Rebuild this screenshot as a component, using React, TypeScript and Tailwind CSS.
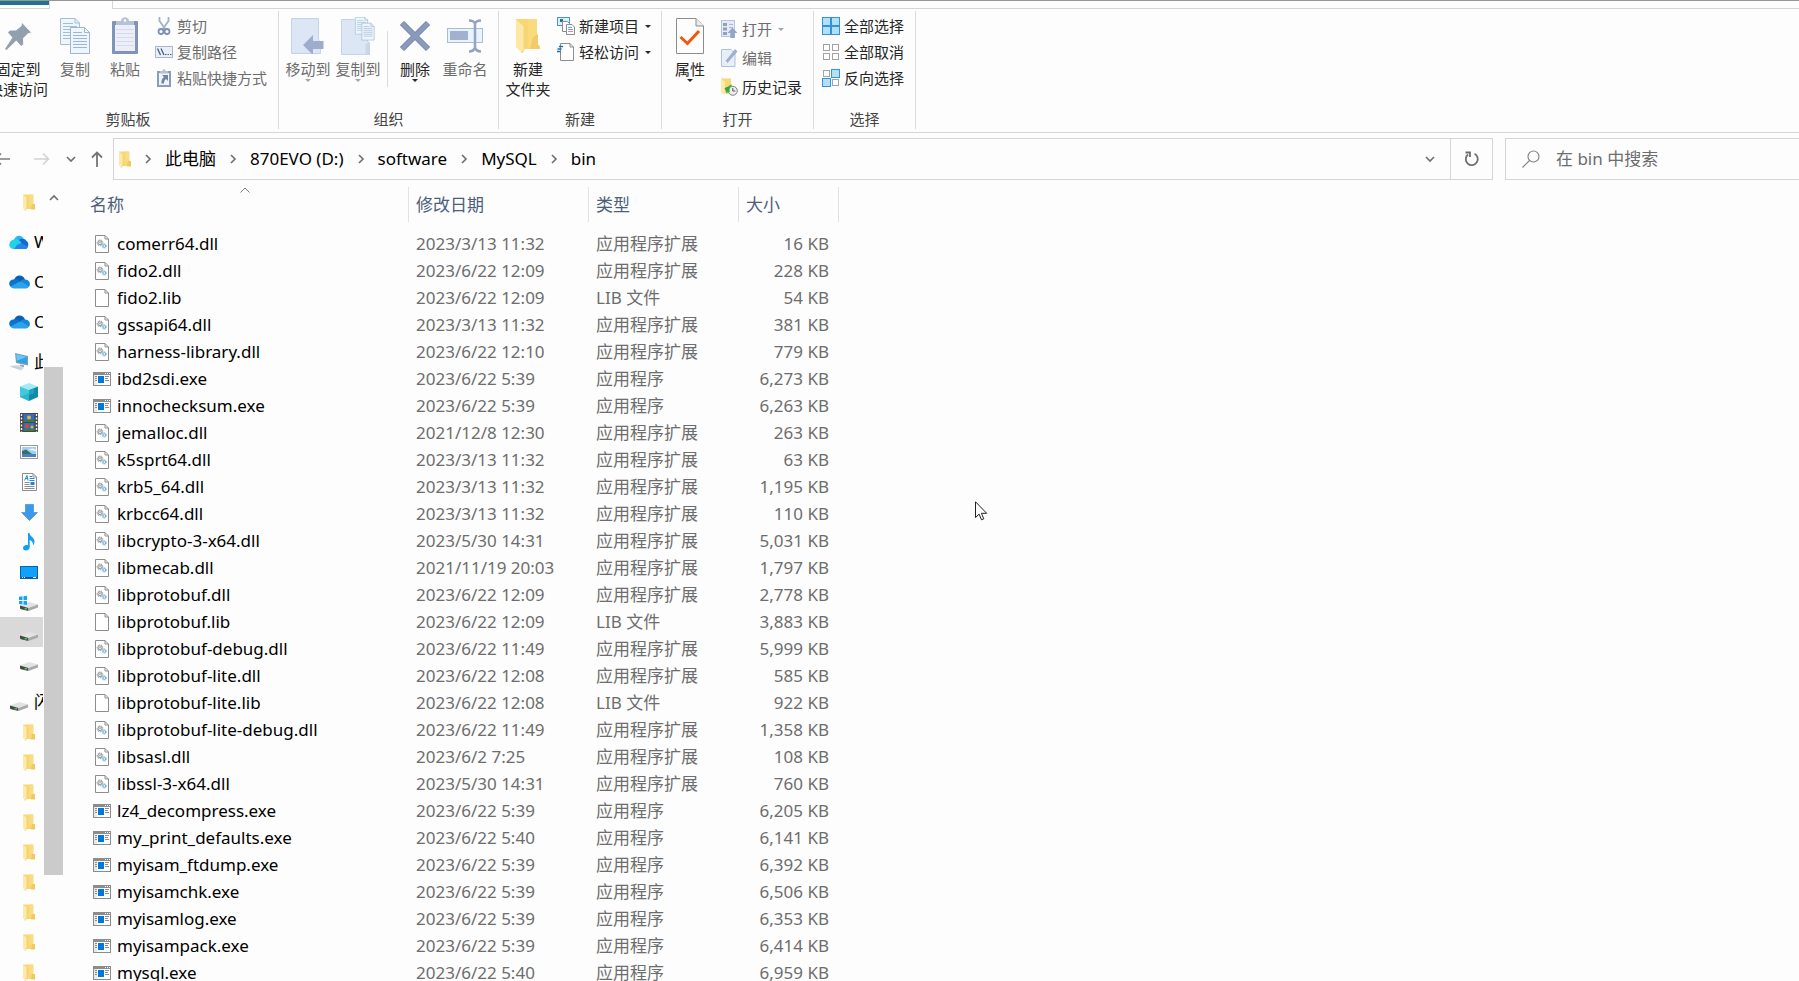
import type { ReactNode } from "react";

type Kind = "dll" | "lib" | "exe";

const typeNames: Record<Kind, string> = {
  dll: "应用程序扩展",
  lib: "LIB 文件",
  exe: "应用程序",
};

const files: [string, Kind, string, string][] = [
  ["comerr64.dll", "dll", "2023/3/13 11:32", "16 KB"],
  ["fido2.dll", "dll", "2023/6/22 12:09", "228 KB"],
  ["fido2.lib", "lib", "2023/6/22 12:09", "54 KB"],
  ["gssapi64.dll", "dll", "2023/3/13 11:32", "381 KB"],
  ["harness-library.dll", "dll", "2023/6/22 12:10", "779 KB"],
  ["ibd2sdi.exe", "exe", "2023/6/22 5:39", "6,273 KB"],
  ["innochecksum.exe", "exe", "2023/6/22 5:39", "6,263 KB"],
  ["jemalloc.dll", "dll", "2021/12/8 12:30", "263 KB"],
  ["k5sprt64.dll", "dll", "2023/3/13 11:32", "63 KB"],
  ["krb5_64.dll", "dll", "2023/3/13 11:32", "1,195 KB"],
  ["krbcc64.dll", "dll", "2023/3/13 11:32", "110 KB"],
  ["libcrypto-3-x64.dll", "dll", "2023/5/30 14:31", "5,031 KB"],
  ["libmecab.dll", "dll", "2021/11/19 20:03", "1,797 KB"],
  ["libprotobuf.dll", "dll", "2023/6/22 12:09", "2,778 KB"],
  ["libprotobuf.lib", "lib", "2023/6/22 12:09", "3,883 KB"],
  ["libprotobuf-debug.dll", "dll", "2023/6/22 11:49", "5,999 KB"],
  ["libprotobuf-lite.dll", "dll", "2023/6/22 12:08", "585 KB"],
  ["libprotobuf-lite.lib", "lib", "2023/6/22 12:08", "922 KB"],
  ["libprotobuf-lite-debug.dll", "dll", "2023/6/22 11:49", "1,358 KB"],
  ["libsasl.dll", "dll", "2023/6/2 7:25", "108 KB"],
  ["libssl-3-x64.dll", "dll", "2023/5/30 14:31", "760 KB"],
  ["lz4_decompress.exe", "exe", "2023/6/22 5:39", "6,205 KB"],
  ["my_print_defaults.exe", "exe", "2023/6/22 5:40", "6,141 KB"],
  ["myisam_ftdump.exe", "exe", "2023/6/22 5:39", "6,392 KB"],
  ["myisamchk.exe", "exe", "2023/6/22 5:39", "6,506 KB"],
  ["myisamlog.exe", "exe", "2023/6/22 5:39", "6,353 KB"],
  ["myisampack.exe", "exe", "2023/6/22 5:39", "6,414 KB"],
  ["mysql.exe", "exe", "2023/6/22 5:40", "6,959 KB"],
];

const crumbs = ["此电脑", "870EVO (D:)", "software", "MySQL", "bin"];

/* ---------- file icons ---------- */

function FileIcon({ kind }: { kind: Kind }) {
  if (kind === "exe") {
    return (
      <svg width="18" height="18" viewBox="0 0 18 18" className="shrink-0">
        <rect x="0.5" y="2.5" width="17" height="13" fill="#fff" stroke="#8c8c8c" />
        <rect x="0" y="2" width="18" height="3" fill="#8c8c8c" />
        <path d="M12 3h1v1h-1zM14 3h1v1h-1zM16 3h1v1h-1z" fill="#fff" />
        <rect x="1" y="5" width="3" height="10" fill="#e8e8e8" />
        <path d="M2 6.5h2M2 8.5h2M2 10.5h2M12 6.5h4M12 8.5h3M12 10.5h4" stroke="#8c8c8c" />
        <rect x="5" y="6" width="6" height="7" fill="#0078d7" />
      </svg>
    );
  }
  return (
    <svg width="18" height="18" viewBox="0 0 18 18" className="shrink-0">
      <path d="M2.5 0.5h9.5l3.5 3.5v13.500h-13z" fill="#fff" stroke="#8d8d8d" />
      <path d="M12 0.5v3.5h3.5" fill="none" stroke="#8d8d8d" />
      {kind === "dll" && (
        <>
          <circle cx="7" cy="7.800" r="2.900" fill="none" stroke="#7c8287" strokeWidth="1" strokeDasharray="0.9 0.9" />
          <circle cx="7" cy="7.800" r="2" fill="#fff" stroke="#7c8287" strokeWidth="0.900" />
          <circle cx="7" cy="7.800" r="0.700" fill="#7c8287" />
          <circle cx="11.300" cy="11" r="2.200" fill="none" stroke="#6aa9c9" strokeWidth="0.900" strokeDasharray="0.8 0.7" />
          <circle cx="11.300" cy="11" r="1.400" fill="#e3f3fb" stroke="#6aa9c9" strokeWidth="0.900" />
        </>
      )}
    </svg>
  );
}

function FolderIcon() {
  return (
    <svg width="12" height="17" viewBox="0 0 12 17" className="shrink-0">
      <path d="M0 0.5h9.5v11l2.5 0.5v3H3z" fill="#f8d775" />
      <path d="M9 10h3v5.5H8z" fill="#f0c95f" />
      <path d="M6.5 0.5h4v9.5h-2l-2 2z" fill="#f9dc84" />
      <path d="M0 0.5l4 3.5v10l-1.8 2.8L0 14z" fill="#fde9a9" />
      <path d="M4 4v10l-1.8 2.8" fill="none" stroke="#eccb6b" strokeWidth="0.6" />
    </svg>
  );
}

/* ---------- navigation pane icons ---------- */

function CloudIcon({ color }: { color: "cyan" | "blue" }) {
  if (color === "cyan") {
    return (
      <svg width="20" height="15" viewBox="0 0 20 15">
        <path d="M6 3C8 0 13-0.5 15 4.5L11 10 4 6z" fill="#2ab4f5" />
        <path d="M9 6c2-3 7-3 8.5 0 2.5 1.5 2.5 6-0.5 8H8z" fill="#1268d8" />
        <path d="M5 4.5c3-1 6 0.5 7.5 3.5L16 14H5c-6 0-6.5-8 0-9.5z" fill="#20d3e6" />
        <path d="M8 10l4-2 7 3.5c-0.8 2-2 2.500-4 2.500H5z" fill="#2484ea" />
      </svg>
    );
  }
  return (
    <svg width="21" height="14" viewBox="0 0 21 14">
      <path d="M5 5C6-0.5 14-1.5 16 4.5L10 9z" fill="#0860b4" />
      <path d="M4.5 4.5C7 3.5 9 4.5 10.5 6L14 9 2 12C-1.5 9 0.5 4.5 4.5 4.5z" fill="#0d73cc" />
      <path d="M11 6.5c2-2 4-2.5 5.5-2 4 0 5.5 4.5 3.5 7.5z" fill="#1687dc" />
      <path d="M1.5 11.5L11 6.5l9 5c-0.8 1.5-2 2-4 2H5c-1.5 0-2.8-0.8-3.5-2z" fill="#2ba3ec" />
    </svg>
  );
}

function ComputerIcon() {
  return (
    <svg width="20" height="18" viewBox="0 0 20 18">
      <path d="M6 0l13 3v9.5L7 10z" fill="#8d99a5" />
      <path d="M7 1.2l11 2.6v7.2L8 8.9z" fill="#29a3ea" />
      <path d="M7 1.2l11 2.6-10 4z" fill="#69c6f7" />
      <path d="M11 11.5l4 0.8v2l-4-0.8z" fill="#9aa7b5" />
      <path d="M0 13l10-1 5 3-3 2.5z" fill="#d6dde7" />
      <path d="M2 13.5l9 2.5M5 13l8 2.5" stroke="#b4c0d0" strokeWidth="0.6" />
    </svg>
  );
}

function CubeIcon() {
  return (
    <svg width="18" height="18" viewBox="0 0 18 18">
      <path d="M0 3.5L9 0l9 3.5L9 7z" fill="#a4eaf4" />
      <path d="M0 3.5L9 7v11l-9-4z" fill="#40c8dc" />
      <path d="M18 3.5L9 7v11l9-4z" fill="#128ba6" />
      <path d="M0 14l9-4v8zM9 7l5-1.5v5L9 12z" fill="#24aec8" opacity="0.7" />
    </svg>
  );
}

function VideoIcon() {
  return (
    <svg width="18" height="19" viewBox="0 0 18 19">
      <rect width="18" height="19" fill="#474747" />
      <path d="M1.5 1v18M16.5 1v18" stroke="#fff" strokeWidth="1.4" strokeDasharray="2 1.5" />
      <rect x="3.5" y="1" width="11" height="8" fill="#2f6fc6" />
      <rect x="3.5" y="10" width="11" height="8" fill="#2f6fc6" />
      <path d="M3.5 7h11v2h-11zM3.5 16h11v2h-11z" fill="#3f7c35" />
      <circle cx="9" cy="4.5" r="2" fill="#f2b321" />
      <circle cx="7" cy="13" r="2" fill="#e2452e" />
      <circle cx="12" cy="14" r="1.5" fill="#f2b321" />
    </svg>
  );
}

function PictureIcon() {
  return (
    <svg width="18" height="14" viewBox="0 0 18 14">
      <rect x="0.5" y="0.5" width="17" height="13" fill="#fff" stroke="#9b9b9b" />
      <rect x="2" y="2" width="14" height="10" fill="#9fd1f7" />
      <path d="M2 6l4-1.5 6 4.5H2z" fill="#3d6e63" />
      <path d="M2 9h14v3H2z" fill="#4784bd" />
      <path d="M8 4.5l5-1 3 1.5v1z" fill="#fff" />
    </svg>
  );
}

function DocumentIcon() {
  return (
    <svg width="15" height="18" viewBox="0 0 15 18">
      <path d="M0.5 0.5H11l3.5 3.5v13.5H0.5z" fill="#fff" stroke="#8d8d8d" />
      <path d="M11 0.5V4h3.5" fill="none" stroke="#8d8d8d" />
      <path d="M2.5 7.5l2.5-5 1 5M3.5 5.5h2.5M7.5 3.5H10M7.5 5.5h5M7.5 7.5h5" stroke="#1e88d8" fill="none" />
      <path d="M2.5 9.5h5M2.5 11.5h5M2.5 13.5h10M2.5 15.5h10" stroke="#848c94" />
      <rect x="8.5" y="9" width="4" height="3" fill="#2f7fc4" />
    </svg>
  );
}

function DownloadIcon() {
  return (
    <svg width="17" height="17" viewBox="0 0 17 17">
      <path d="M4.5 0.5h8v8H16.5l-8 8-8-8h4z" fill="#3c98e8" stroke="#2e86d6" strokeWidth="0.6" />
    </svg>
  );
}

function MusicIcon() {
  return (
    <svg width="12" height="18" viewBox="0 0 12 18">
      <path d="M5 0h1.5c0.5 3.5 5 4.5 5 8.5 0 1.800-0.8 3-1.5 4 0.5-3-1.2-4.800-3.300-5.500V14c0 2.200-1.700 3.500-3.700 3.500S0 16.500 0 15c0-2 2.500-3.500 5-2.800z" fill="#0fa0f5" />
    </svg>
  );
}

function DesktopIcon() {
  return (
    <svg width="18" height="13" viewBox="0 0 18 13">
      <rect x="0.5" y="0.5" width="17" height="12" fill="#0fa2fb" stroke="#0b62a8" />
      <rect x="1" y="11" width="16" height="1" fill="#0b4f8c" />
      <path d="M2 11.5h1M4 11.5h1M13 11.5h3" stroke="#fff" />
    </svg>
  );
}

function DriveIcon({ system }: { system?: boolean }) {
  return (
    <svg width="20" height="18" viewBox="0 0 20 18">
      <path d="M1 12.500l9.500-3.500 8.500 2.500-9.500 3.500z" fill="#e2e2e2" />
      <path d="M1 12.500l8.500 2.500V18L2 16.300 1 15.500z" fill="#474747" />
      <path d="M9.500 15l9.500-3.500V14.500L9.500 18z" fill="#a9a9a9" />
      <rect x="5.500" y="15" width="2.500" height="1.500" fill="#3fcf45" />
      {system && <path d="M0 3.800l3.500-0.500v3.700H0zM4.500 3.200L8 2.800v4.200H4.500zM0 8h3.500v3.500L0 11zM4.500 8H8v4l-3.500-0.400z" fill="#12a5f4" />}
    </svg>
  );
}

/* ---------- ribbon icons ---------- */

function PinIcon() {
  return (
    <svg width="26" height="27" viewBox="0 0 26 27">
      <path d="M17 0l9 9.5-3 0.8-5 5 0.2 6-2 1.7-5-5.5L1.5 27 0 26l7.5-11.5L3 9.5l2-2h6L16.5 3z" fill="#919fae" />
    </svg>
  );
}

function CopyPages({ small }: { small?: boolean }) {
  return (
    <g transform={small ? "translate(14 0) scale(0.65)" : undefined}>
      <path d="M0.5 0.5h14.5l4.5 4.5v21.5H0.5z" fill="#edf6fc" stroke="#a6bdd6" />
      <path d="M15 0.5V5h4.5M3 5.5h10M3 8.5h14M3 11.5h14M3 14.5h7M3 17.5h7M3 20.5h7" stroke="#a6bdd6" fill="none" />
      <path d="M10.5 9.5h14l5 5v21h-19z" fill="#edf6fc" stroke="#a0b5d2" />
      <path d="M24.5 9.5v5h5M13 14.5h9M13 17.5h14M13 20.5h14M13 23.5h14M13 26.5h14M13 29.5h14" stroke="#a0b5d2" fill="none" />
    </g>
  );
}

function CopyIcon() {
  return (
    <svg width="30" height="36" viewBox="0 0 30 36">
      <CopyPages />
    </svg>
  );
}

function PasteIcon() {
  return (
    <svg width="26" height="38" viewBox="0 0 26 38">
      <rect y="4" width="26" height="33" rx="1" fill="#8193ba" />
      <path d="M3 8h20v26H3z" fill="#eceff8" />
      <path d="M4 12.5h18M4 16.5h18M4 20.5h18M4 24.5h18M4 28.5h18" stroke="#d3dbec" />
      <path d="M4 4h5c0-5 8-5 8 0h5v4H4z" fill="#b6c2d8" />
      <circle cx="13" cy="3.5" r="1.3" fill="#fff" />
    </svg>
  );
}

function MoveToIcon() {
  return (
    <svg width="34" height="36" viewBox="0 0 34 36">
      <path d="M0.5 0.5h27V22l2 2v11.5H0.5z" fill="#dde6f4" stroke="#c6d2e8" />
      <path d="M12 27l10-10v6h10.5v8H22v6z" fill="#9dadcb" />
    </svg>
  );
}

function CopyToIcon() {
  return (
    <svg width="34" height="38" viewBox="0 0 34 38">
      <path d="M0.5 2.5h26V24l2 2v11.5H0.5z" fill="#dde6f4" stroke="#c6d2e8" />
      <path d="M24.5 27l4-2v12.5h-4z" fill="#cbd6e8" />
      <CopyPages small />
    </svg>
  );
}

function DeleteIcon() {
  return (
    <svg width="32" height="32" viewBox="0 0 32 32">
      <path d="M3 3l26 26M29 3L3 29" stroke="#7386ae" strokeWidth="6" />
      <path d="M3 3l26 26M29 3L3 29" stroke="#8a9aba" strokeWidth="4" />
    </svg>
  );
}

function RenameIcon() {
  return (
    <svg width="36" height="34" viewBox="0 0 36 34">
      <rect x="0.5" y="9.5" width="35" height="14" fill="#e9f3fc" stroke="#a7bcd8" />
      <rect x="3" y="12" width="18" height="9" fill="#a2b1cf" />
      <path d="M22 1.5c3 0 5 0.5 6 3 1-2.5 3-3 6-3M22 32.5c3 0 5-1 6-4 1 3 3 4 6 4M28 4v25" fill="none" stroke="#92a3c4" strokeWidth="2.5" />
    </svg>
  );
}

function NewFolderIcon() {
  return (
    <svg width="25" height="36" viewBox="0 0 25 36">
      <path d="M0 1h21v25l3 2v3H8z" fill="#f8d673" />
      <path d="M12 1h9v24l-5 2-4 3z" fill="#fadb7c" />
      <path d="M17 19l5-3v11l2 4H14z" fill="#efcc69" />
      <path d="M0 1l8 8v24l-2 2.5L0 29z" fill="#fde8a5" />
      <path d="M8 9v22l-2 4" stroke="#f2d581" fill="none" />
    </svg>
  );
}

function PropertiesIcon() {
  return (
    <svg width="28" height="36" viewBox="0 0 28 36">
      <path d="M0.5 0.5H20l7.5 7.5v27.5H0.5z" fill="#fdfdfd" stroke="#8c8c8c" />
      <path d="M20 0.5V8h7.5" fill="#ececec" stroke="#8c8c8c" />
      <path d="M4.5 19l7 6.5L23 13" fill="none" stroke="#f1570d" strokeWidth="3" />
    </svg>
  );
}

function CutIcon() {
  return (
    <svg width="18" height="18" viewBox="0 0 18 18">
      <path d="M4.5 0v4l6.5 9M13.5 0v4L7 13" fill="none" stroke="#a3b1c8" strokeWidth="1.8" />
      <circle cx="6" cy="14.5" r="2.5" fill="none" stroke="#7d90b5" strokeWidth="1.8" />
      <circle cx="12" cy="14.5" r="2.5" fill="none" stroke="#7d90b5" strokeWidth="1.8" />
    </svg>
  );
}

function CopyPathIcon() {
  return (
    <svg width="18" height="18" viewBox="0 0 18 18">
      <rect x="0.5" y="3.5" width="17" height="11" fill="#e8eff9" stroke="#a9b9d4" />
      <path d="M2.5 5.5l3 6.5M6 5.5l3 6.5" stroke="#4c5f85" strokeWidth="1.3" />
      <path d="M10 11.5h1.500M12.500 11.500H14M15 11.500h1.500" stroke="#4c5f85" />
    </svg>
  );
}

function PasteShortcutIcon() {
  return (
    <svg width="18" height="18" viewBox="0 0 18 18">
      <path d="M2 2h14v16H2z" fill="#8c9cbf" />
      <path d="M4 4h10v12H4z" fill="#f0f3fa" />
      <path d="M5 2h2.5c0-2.5 3-2.5 3 0H13v2.5H5z" fill="#b3c0d6" />
      <path d="M7 6h6v6l-2-2c-1.500 1-2 2.500-2 4.500H6.500c-0.500-2.500 0.500-5 2.500-6.500z" fill="#6f83ab" />
    </svg>
  );
}

function NewItemIcon() {
  return (
    <svg width="18" height="18" viewBox="0 0 18 18">
      <rect x="0.5" y="0.5" width="12" height="8" fill="#d7eefb" stroke="#4a98c0" />
      <rect x="3" y="2" width="3" height="3" fill="#2e6f95" />
      <path d="M5.5 4.5h5l2 2v8h-7z" fill="#fff" stroke="#8d8d8d" />
      <path d="M9.5 7.5h5.5l2.5 2.5v7.5h-8z" fill="#fff" stroke="#8d8d8d" />
      <path d="M11 10.5h4M11 12.5h5" stroke="#5fa8d3" />
      <path d="M11 14.5h5" stroke="#e08a83" />
    </svg>
  );
}

function EasyAccessIcon() {
  return (
    <svg width="18" height="18" viewBox="0 0 18 18">
      <path d="M3.5 0.5h9.5l3.5 3.5v13.5H3.5z" fill="#fff" stroke="#8d8d8d" />
      <path d="M13 0.5V4h3.5" fill="none" stroke="#8d8d8d" />
      <path d="M2 3.5h4M0.5 6h4M0 8.5h3.5" stroke="#1673b8" strokeWidth="1.4" />
    </svg>
  );
}

function OpenIcon() {
  return (
    <svg width="17" height="18" viewBox="0 0 17 18">
      <rect x="0.5" y="0.5" width="13" height="16" fill="#e4ebf7" stroke="#b6c4dc" />
      <path d="M2 3h4v3H2zM2 7.5h4v3H2zM2 12h4v3H2z" fill="#8fa1c5" />
      <path d="M8 4.5h4M8 7.5h4" stroke="#aab9d5" />
      <path d="M11.5 7.5l5 5.5h-2.8v5H9.3v-5H6.5z" fill="#94a6c8" />
    </svg>
  );
}

function EditIcon() {
  return (
    <svg width="17" height="18" viewBox="0 0 17 18">
      <path d="M0.5 0.5H10l4 4v13H0.5z" fill="#e6effa" stroke="#b0c0da" />
      <path d="M14 0l2.5 2.5L6.5 14 3 15.5 4.5 12z" fill="#a1b1cd" />
      <path d="M4.5 12l2 2-3.5 1.5z" fill="#fff" />
    </svg>
  );
}

function HistoryIcon() {
  return (
    <svg width="17" height="18" viewBox="0 0 17 18">
      <path d="M0 0.5h10v15H3z" fill="#f8d775" />
      <path d="M0 0.5l4 3.5v10l-1.5 2.5L0 14z" fill="#fde9a9" />
      <circle cx="11.8" cy="12.8" r="4.5" fill="#ececec" stroke="#7e7e7e" />
      <path d="M11.8 10v3h2.5" stroke="#555" fill="none" />
      <path d="M3.5 10l4-1.5C8.500 7 10 6.500 11.500 7 8.500 8.500 8 11 9 14.500L7 13l-1 3z" fill="#2bab3c" />
    </svg>
  );
}

function SelectIcon({ on }: { on: [boolean, boolean, boolean, boolean] }) {
  return (
    <svg width="18" height="18" viewBox="0 0 18 18">
      {on.map((selected, i) => {
        const x = (i % 2) * 9;
        const y = Math.floor(i / 2) * 9;
        return selected ? (
          <rect key={i} x={x + 0.5} y={y + 0.5} width="8" height="8" fill="#b5def8" stroke="#2f94e0" />
        ) : (
          <rect key={i} x={x + 1.5} y={y + 1.5} width="6" height="6" fill="#fff" stroke="#a3a3a3" />
        );
      })}
    </svg>
  );
}

/* ---------- ribbon ---------- */

function Caret({ muted }: { muted?: boolean }) {
  return (
    <svg width="6" height="3" viewBox="0 0 6 3" className="shrink-0">
      <path d="M0 0h6L3 3z" fill={muted ? "#a6a6a6" : "#262626"} />
    </svg>
  );
}

type ButtonProps = {
  icon: ReactNode;
  label: string;
  label2?: string;
  muted?: boolean;
  caret?: boolean;
  wide?: boolean;
};

function BigButton({ icon, label, label2, muted, caret, wide }: ButtonProps) {
  return (
    <button
      className={`flex shrink-0 flex-col items-center ${wide ? "w-[58px]" : "w-[50px]"} ${muted ? "text-[#6d6d6d]" : "text-[#262626]"}`}
    >
      <span className="mt-[5px] mb-[3px] flex h-10 items-center">{icon}</span>
      <span className="whitespace-nowrap">{label}</span>
      {label2 && <span className="whitespace-nowrap">{label2}</span>}
      {caret && <Caret muted={muted} />}
    </button>
  );
}

function SmallButton({ icon, label, muted, caret }: ButtonProps) {
  return (
    <button className={`flex items-center gap-1 whitespace-nowrap ${muted ? "text-[#6d6d6d]" : "text-[#262626]"}`}>
      {icon}
      <span>{label}</span>
      {caret && (
        <span className="ml-0.5">
          <Caret muted={muted} />
        </span>
      )}
    </button>
  );
}

function Group({ title, className, children }: { title: string; className: string; children: ReactNode }) {
  return (
    <section className={`flex shrink-0 flex-col justify-between border-r border-[#dcdcdc] ${className}`}>
      <div className="flex">{children}</div>
      <h2 className="text-center text-[#444]">{title}</h2>
    </section>
  );
}

function Ribbon() {
  return (
    <div className="flex h-[124px] overflow-hidden border-b border-[#d6d6d6] pt-0.5 pb-[3px] text-[15px] leading-5">
      <Group title="剪贴板" className="-ml-[22px] w-[301px]">
        <div className="ml-[11px]">
          <BigButton icon={<PinIcon />} label="固定到" label2="快速访问" wide />
        </div>
        <div className="ml-[3px] flex">
          <BigButton icon={<CopyIcon />} label="复制" muted />
          <BigButton icon={<PasteIcon />} label="粘贴" muted />
        </div>
        <div className="ml-[5px] flex flex-col gap-1.5 pt-[5px]">
          <SmallButton icon={<CutIcon />} label="剪切" muted />
          <SmallButton icon={<CopyPathIcon />} label="复制路径" muted />
          <SmallButton icon={<PasteShortcutIcon />} label="粘贴快捷方式" muted />
        </div>
      </Group>

      <Group title="组织" className="w-[220px]">
        <div className="ml-1 flex">
          <BigButton icon={<MoveToIcon />} label="移动到" muted caret />
          <BigButton icon={<CopyToIcon />} label="复制到" muted caret />
        </div>
        <div className="mt-5 mr-0.5 ml-1 h-14 w-px bg-[#dcdcdc]" />
        <BigButton icon={<DeleteIcon />} label="删除" caret />
        <BigButton icon={<RenameIcon />} label="重命名" muted />
      </Group>

      <Group title="新建" className="w-[163px]">
        <BigButton icon={<NewFolderIcon />} label="新建" label2="文件夹" wide />
        <div className="flex flex-col gap-1.5 pt-[5px]">
          <SmallButton icon={<NewItemIcon />} label="新建项目" caret />
          <SmallButton icon={<EasyAccessIcon />} label="轻松访问" caret />
        </div>
      </Group>

      <Group title="打开" className="w-[152px]">
        <div className="ml-[3px]">
          <BigButton icon={<PropertiesIcon />} label="属性" caret />
        </div>
        <div className="ml-1.5 flex flex-col gap-[9px] pt-2">
          <SmallButton icon={<OpenIcon />} label="打开" muted caret />
          <SmallButton icon={<EditIcon />} label="编辑" muted />
          <SmallButton icon={<HistoryIcon />} label="历史记录" />
        </div>
      </Group>

      <Group title="选择" className="w-[102px]">
        <div className="ml-2 flex flex-col gap-1.5 pt-[5px]">
          <SmallButton icon={<SelectIcon on={[true, true, true, true]} />} label="全部选择" />
          <SmallButton icon={<SelectIcon on={[false, false, false, false]} />} label="全部取消" />
          <SmallButton icon={<SelectIcon on={[false, true, true, false]} />} label="反向选择" />
        </div>
      </Group>
    </div>
  );
}

/* ---------- address bar ---------- */

function Chevron({ dir }: { dir: "right" | "down" | "up" }) {
  const d = { right: "M3 1l4 4-4 4", down: "M1 3l4 4 4-4", up: "M1 7l4-4 4 4" }[dir];
  return (
    <svg width="10" height="10" viewBox="0 0 10 10" className="shrink-0">
      <path d={d} fill="none" stroke="#6e6e6e" strokeWidth="1.6" />
    </svg>
  );
}

function AddressBar() {
  return (
    <div className="mb-0.5 flex h-[52px] items-center">
      <nav className="flex w-[113px] shrink-0 items-center">
        <button aria-label="后退" className="-ml-1.5">
          <svg width="16" height="14" viewBox="0 0 16 14">
            <path d="M16 7H1.5M7 1.5L1.5 7 7 12.5" fill="none" stroke="#7d7d7d" strokeWidth="1.6" />
          </svg>
        </button>
        <button aria-label="前进" className="ml-6">
          <svg width="16" height="14" viewBox="0 0 16 14">
            <path d="M0 7h14.5M9 1.5L14.5 7 9 12.5" fill="none" stroke="#d2d2d2" strokeWidth="1.6" />
          </svg>
        </button>
        <button aria-label="最近浏览的位置" className="ml-4">
          <Chevron dir="down" />
        </button>
        <button aria-label="上移" className="ml-[15px]">
          <svg width="12" height="16" viewBox="0 0 12 16">
            <path d="M6 16V1.5M1 6.500L6 1.500l5 5" fill="none" stroke="#757575" strokeWidth="1.8" />
          </svg>
        </button>
      </nav>

      <div className="flex h-[42px] min-w-0 flex-1 items-center border border-[#d5d5d5]">
        <div className="flex flex-1 items-center pl-[5px]">
          <FolderIcon />
          {crumbs.map((crumb) => (
            <div key={crumb} className="flex items-center">
              <span className="mx-3">
                <Chevron dir="right" />
              </span>
              <a href="#" className="whitespace-nowrap text-[17px] leading-6 text-black">
                {crumb}
              </a>
            </div>
          ))}
        </div>
        <button aria-label="展开" className="flex w-10 justify-center">
          <Chevron dir="down" />
        </button>
        <button aria-label="刷新" className="flex h-full w-[42px] items-center justify-center border-l border-[#d5d5d5]">
          <svg width="16" height="16" viewBox="0 0 16 16">
            <path d="M10.5 2.8A6 6 0 1 1 4 3.5" fill="none" stroke="#6e6e6e" strokeWidth="1.8" />
            <path d="M1.5 1.5H6V6" fill="none" stroke="#6e6e6e" strokeWidth="1.8" />
          </svg>
        </button>
      </div>

      <label className="ml-3 flex h-[42px] w-[294px] shrink-0 items-center border border-r-0 border-[#d5d5d5] pl-4">
        <svg width="18" height="18" viewBox="0 0 18 18" className="shrink-0">
          <circle cx="11.5" cy="6.5" r="5.5" fill="none" stroke="#858585" strokeWidth="1.2" />
          <path d="M7.5 10.5l-7 7" stroke="#858585" strokeWidth="1.2" />
        </svg>
        <input
          type="text"
          aria-label="搜索"
          placeholder="在 bin 中搜索"
          className="ml-4 min-w-0 flex-1 bg-transparent text-[17px] leading-6 outline-none placeholder:text-[#6d6d6d]"
        />
      </label>
    </div>
  );
}

/* ---------- navigation pane ---------- */

function NavItem({ icon, label, selected, spaced }: { icon: ReactNode; label?: string; selected?: boolean; spaced?: boolean }) {
  return (
    <a
      href="#"
      className={`flex h-[30px] shrink-0 items-center overflow-hidden ${spaced ? "mt-2.5" : ""} ${selected ? "bg-[#d9d9d9]" : ""}`}
    >
      <span className={`flex w-[22px] shrink-0 justify-center ${label ? "ml-2" : "ml-[18px]"}`}>{icon}</span>
      {label && <span className="ml-1 text-[17px] leading-6 whitespace-nowrap text-black">{label}</span>}
    </a>
  );
}

function NavigationPane() {
  return (
    <aside className="flex w-[82px] shrink-0 overflow-hidden">
      <div className="flex w-[43px] flex-col">
        <NavItem icon={<FolderIcon />} />
        <NavItem icon={<CloudIcon color="cyan" />} label="W" spaced />
        <NavItem icon={<CloudIcon color="blue" />} label="O" spaced />
        <NavItem icon={<CloudIcon color="blue" />} label="O" spaced />
        <NavItem icon={<ComputerIcon />} label="此" spaced />
        <NavItem icon={<CubeIcon />} />
        <NavItem icon={<VideoIcon />} />
        <NavItem icon={<PictureIcon />} />
        <NavItem icon={<DocumentIcon />} />
        <NavItem icon={<DownloadIcon />} />
        <NavItem icon={<MusicIcon />} />
        <NavItem icon={<DesktopIcon />} />
        <NavItem icon={<DriveIcon system />} />
        <NavItem icon={<DriveIcon />} selected />
        <NavItem icon={<DriveIcon />} />
        <NavItem icon={<DriveIcon />} label="闪" spaced />
        {Array.from({ length: 9 }, (_, i) => (
          <NavItem key={i} icon={<FolderIcon />} />
        ))}
      </div>
      <div className="ml-px flex w-[19px] flex-col items-center pt-1.5">
        <Chevron dir="up" />
        <div className="mt-[164px] h-[508px] w-full shrink-0 bg-[#cbcbcb]" />
      </div>
    </aside>
  );
}

/* ---------- file list ---------- */

function FileList() {
  return (
    <main className="min-w-0 flex-1 overflow-hidden">
      <table className="w-[757px] table-fixed border-separate border-spacing-0 text-[17px] leading-[27px]">
        <colgroup>
          <col className="w-[327px]" />
          <col className="w-[180px]" />
          <col className="w-[150px]" />
          <col className="w-[100px]" />
        </colgroup>
        <thead>
          <tr className="text-left text-[#4c607a]">
            <th className="relative h-[35px] border-r border-[#e2e2e2] p-0 pl-2 font-normal">
              <button>名称</button>
              <svg width="10" height="6" viewBox="0 0 10 6" className="absolute top-0 left-1/2 -translate-x-1/2">
                <path d="M0.5 5.5l4.5-4.5 4.5 4.5" fill="none" stroke="#7a7a7a" />
              </svg>
            </th>
            <th className="border-r border-[#e2e2e2] p-0 pl-[7px] font-normal">
              <button>修改日期</button>
            </th>
            <th className="border-r border-[#e2e2e2] p-0 pl-[7px] font-normal">
              <button>类型</button>
            </th>
            <th className="border-r border-[#e2e2e2] p-0 pl-[7px] font-normal">
              <button>大小</button>
            </th>
          </tr>
        </thead>
        <tbody className="text-[#6d6d6d] before:block before:h-2">
          {files.map(([name, kind, date, size]) => (
            <tr key={name} className="h-[27px] whitespace-nowrap">
              <td className="p-0 pl-[11px]">
                <div className="flex h-[27px] items-center gap-1.5 text-black">
                  <FileIcon kind={kind} />
                  {name}
                </div>
              </td>
              <td className="p-0 pl-[7px]">{date}</td>
              <td className="p-0 pl-[7px]">{typeNames[kind]}</td>
              <td className="p-0 pr-2.5 text-right">{size}</td>
            </tr>
          ))}
        </tbody>
      </table>
    </main>
  );
}

export default function App() {
  return (
    <div className="relative flex h-screen flex-col overflow-hidden bg-[#fdfdfd] font-['Noto_Sans','Noto_Sans_CJK_SC',sans-serif]">
      <div className="flex h-[9px] shrink-0 border-t border-[#979797]">
        <div className="w-[50px] border-r border-b border-[#d6d6d6]">
          <div className="h-1 bg-[#22728c]" />
        </div>
        <div className="w-[62px]" />
        <div className="flex-1 border-b border-l border-[#d6d6d6]" />
      </div>

      <div className="shrink-0">
        <Ribbon />
        <AddressBar />
      </div>

      <div className="flex min-h-0 flex-1">
        <NavigationPane />
        <FileList />
      </div>

      {/* mouse pointer */}
      <svg width="13" height="20" viewBox="0 0 13 20" className="absolute top-[501px] left-[975px]">
        <path d="M0.5 0.8v15.7l3.6-3.4 2.4 5.7 2.3-1-2.4-5.5h5.3z" fill="#fff" stroke="#222" />
      </svg>
    </div>
  );
}
